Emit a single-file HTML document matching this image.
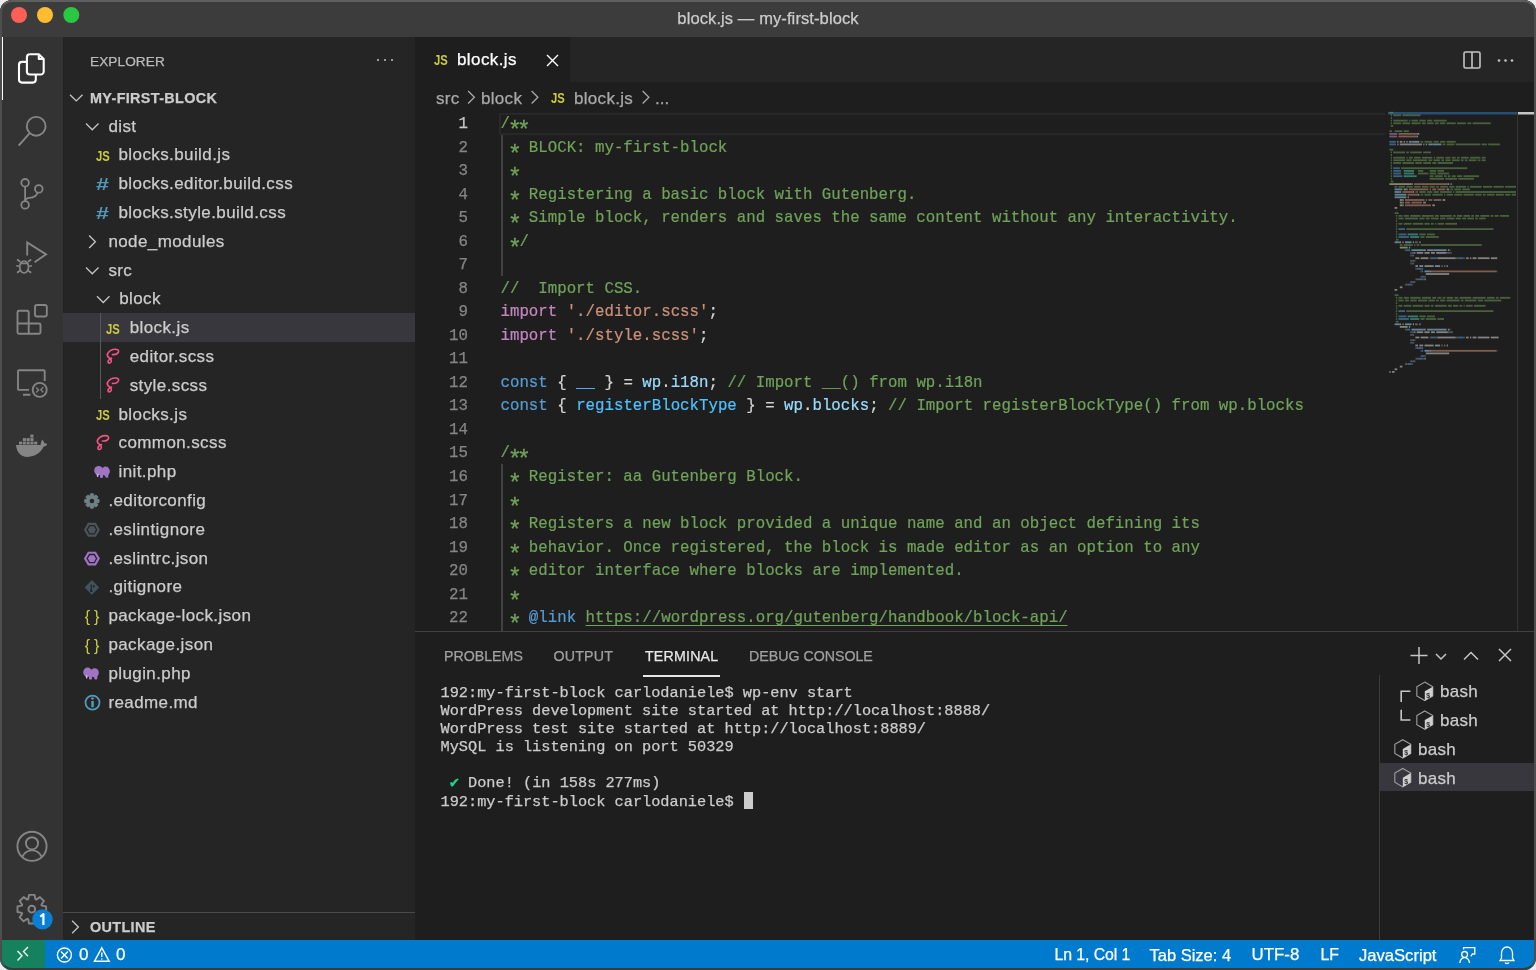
<!DOCTYPE html>
<html><head><meta charset="utf-8"><title>block.js — my-first-block</title>
<style>
*{margin:0;padding:0;box-sizing:border-box}
html,body{width:1536px;height:970px;overflow:hidden;background:#ececec}
body{position:relative;font-family:'Liberation Sans', sans-serif}
#win{position:absolute;left:0;top:0;width:1536px;height:970px;border-radius:12px;overflow:hidden;background:#1e1e1e;filter:blur(0.35px)}
.t{position:absolute;white-space:pre;-webkit-text-stroke:0.25px currentColor}
.r{position:absolute}
svg.ov{position:absolute;left:0;top:0;width:1536px;height:970px}
.ast{display:inline-block;width:9.45px;transform:translateY(8.3px) scale(1.5)}
</style></head>
<body><div id="win"><div class="r" style="left:0px;top:0px;width:1536px;height:37px;background:#3c3c3c;"></div><div class="r" style="left:0px;top:37px;width:63px;height:903px;background:#333333;"></div><div class="r" style="left:63px;top:37px;width:352px;height:903px;background:#252526;"></div><div class="r" style="left:415px;top:37px;width:1121px;height:45px;background:#252526;"></div><div class="r" style="left:415px;top:37px;width:155px;height:45px;background:#1e1e1e;"></div><div class="r" style="left:415px;top:82px;width:1121px;height:549px;background:#1e1e1e;"></div><div class="r" style="left:415px;top:631px;width:1121px;height:309px;background:#1e1e1e;"></div><div class="r" style="left:415px;top:631px;width:1121px;height:1px;background:#414141;"></div><div class="r" style="left:0px;top:940px;width:1536px;height:30px;background:#007acc;"></div><div class="r" style="left:0px;top:940px;width:45px;height:30px;background:#16825d;"></div><div class="t" style="left:0px;top:7.00px;height:23px;line-height:23px;font-size:16.5px;color:#cccccc;letter-spacing:0.1px;width:1536px;text-align:center;">block.js — my-first-block</div><div class="t" style="left:90px;top:51.50px;height:19px;line-height:19px;font-size:13.6px;color:#bbbbbb;letter-spacing:0.1px;">EXPLORER</div><div class="r" style="left:376.8px;top:58.8px;width:2.6px;height:2.6px;border-radius:50%;background:#c5c5c5"></div><div class="r" style="left:383.8px;top:58.8px;width:2.6px;height:2.6px;border-radius:50%;background:#c5c5c5"></div><div class="r" style="left:390.8px;top:58.8px;width:2.6px;height:2.6px;border-radius:50%;background:#c5c5c5"></div><div class="r" style="left:63px;top:313.2px;width:352px;height:28.6px;background:#37373d;"></div><div class="r" style="left:100px;top:312.5px;width:1px;height:86.4px;background:#585858;"></div><div class="t" style="left:90px;top:87.80px;height:20px;line-height:20px;font-size:14.4px;color:#cccccc;font-weight:700;letter-spacing:0.35px;">MY-FIRST-BLOCK</div><div class="t" style="left:108.4px;top:114.60px;height:24px;line-height:24px;font-size:17px;color:#cccccc;letter-spacing:0.4px;">dist</div><div class="t" style="left:118.5px;top:143.40px;height:24px;line-height:24px;font-size:17px;color:#cccccc;letter-spacing:0.4px;">blocks.build.js</div><div class="t" style="left:118.5px;top:172.20px;height:24px;line-height:24px;font-size:17px;color:#cccccc;letter-spacing:0.4px;">blocks.editor.build.css</div><div class="t" style="left:118.5px;top:201.00px;height:24px;line-height:24px;font-size:17px;color:#cccccc;letter-spacing:0.4px;">blocks.style.build.css</div><div class="t" style="left:108.4px;top:229.80px;height:24px;line-height:24px;font-size:17px;color:#cccccc;letter-spacing:0.4px;">node_modules</div><div class="t" style="left:108.4px;top:258.60px;height:24px;line-height:24px;font-size:17px;color:#cccccc;letter-spacing:0.4px;">src</div><div class="t" style="left:119.2px;top:287.40px;height:24px;line-height:24px;font-size:17px;color:#cccccc;letter-spacing:0.4px;">block</div><div class="t" style="left:129.7px;top:316.20px;height:24px;line-height:24px;font-size:17px;color:#cccccc;letter-spacing:0.4px;">block.js</div><div class="t" style="left:129.7px;top:345.00px;height:24px;line-height:24px;font-size:17px;color:#cccccc;letter-spacing:0.4px;">editor.scss</div><div class="t" style="left:129.7px;top:373.80px;height:24px;line-height:24px;font-size:17px;color:#cccccc;letter-spacing:0.4px;">style.scss</div><div class="t" style="left:118.5px;top:402.60px;height:24px;line-height:24px;font-size:17px;color:#cccccc;letter-spacing:0.4px;">blocks.js</div><div class="t" style="left:118.5px;top:431.40px;height:24px;line-height:24px;font-size:17px;color:#cccccc;letter-spacing:0.4px;">common.scss</div><div class="t" style="left:118.5px;top:460.20px;height:24px;line-height:24px;font-size:17px;color:#cccccc;letter-spacing:0.4px;">init.php</div><div class="t" style="left:108.4px;top:489.00px;height:24px;line-height:24px;font-size:17px;color:#cccccc;letter-spacing:0.4px;">.editorconfig</div><div class="t" style="left:108.4px;top:517.80px;height:24px;line-height:24px;font-size:17px;color:#cccccc;letter-spacing:0.4px;">.eslintignore</div><div class="t" style="left:108.4px;top:546.60px;height:24px;line-height:24px;font-size:17px;color:#cccccc;letter-spacing:0.4px;">.eslintrc.json</div><div class="t" style="left:108.4px;top:575.40px;height:24px;line-height:24px;font-size:17px;color:#cccccc;letter-spacing:0.4px;">.gitignore</div><div class="t" style="left:108.4px;top:604.20px;height:24px;line-height:24px;font-size:17px;color:#cccccc;letter-spacing:0.4px;">package-lock.json</div><div class="t" style="left:108.4px;top:633.00px;height:24px;line-height:24px;font-size:17px;color:#cccccc;letter-spacing:0.4px;">package.json</div><div class="t" style="left:108.4px;top:661.80px;height:24px;line-height:24px;font-size:17px;color:#cccccc;letter-spacing:0.4px;">plugin.php</div><div class="t" style="left:108.4px;top:690.60px;height:24px;line-height:24px;font-size:17px;color:#cccccc;letter-spacing:0.4px;">readme.md</div><div class="r" style="left:63px;top:912px;width:352px;height:1px;background:#4a4a4a;"></div><div class="t" style="left:90px;top:917.00px;height:20px;line-height:20px;font-size:14.4px;color:#cccccc;font-weight:700;letter-spacing:0.35px;">OUTLINE</div><div class="t" style="left:457px;top:48.00px;height:24px;line-height:24px;font-size:17px;color:#ffffff;letter-spacing:0.4px;">block.js</div><div class="t" style="left:436px;top:86.60px;height:24px;line-height:24px;font-size:17px;color:#a9a9a9;letter-spacing:0.3px;">src</div><div class="t" style="left:481px;top:86.60px;height:24px;line-height:24px;font-size:17px;color:#a9a9a9;letter-spacing:0.3px;">block</div><div class="t" style="left:574px;top:86.60px;height:24px;line-height:24px;font-size:17px;color:#a9a9a9;letter-spacing:0.3px;">block.js</div><div class="t" style="left:655px;top:86.60px;height:24px;line-height:24px;font-size:17px;color:#a9a9a9;">...</div><div class="r" style="left:499px;top:112.5px;width:886px;height:22px;border:2px solid #282828;border-right:none"></div><div class="r" style="left:501px;top:134.5px;width:1.5px;height:141px;background:#404040;"></div><div class="r" style="left:501px;top:463.5px;width:1.5px;height:167px;background:#404040;"></div><div class="t" style="left:380px;top:113.20px;height:23px;line-height:23px;font-size:15.75px;color:#c6c6c6;font-family:'Liberation Mono', monospace;width:88px;text-align:right;">1</div><div class="t" style="left:500.5px;top:113.20px;height:23px;line-height:23px;font-size:15.75px;color:#d4d4d4;font-family:'Liberation Mono', monospace;-webkit-text-stroke:0.2px currentColor;"><span style="color:#70a35a">/<span class="ast">*</span><span class="ast">*</span></span></div><div class="t" style="left:380px;top:136.72px;height:23px;line-height:23px;font-size:15.75px;color:#858585;font-family:'Liberation Mono', monospace;width:88px;text-align:right;">2</div><div class="t" style="left:500.5px;top:136.72px;height:23px;line-height:23px;font-size:15.75px;color:#d4d4d4;font-family:'Liberation Mono', monospace;-webkit-text-stroke:0.2px currentColor;"><span style="color:#70a35a"> <span class="ast">*</span> BLOCK: my-first-block</span></div><div class="t" style="left:380px;top:160.24px;height:23px;line-height:23px;font-size:15.75px;color:#858585;font-family:'Liberation Mono', monospace;width:88px;text-align:right;">3</div><div class="t" style="left:500.5px;top:160.24px;height:23px;line-height:23px;font-size:15.75px;color:#d4d4d4;font-family:'Liberation Mono', monospace;-webkit-text-stroke:0.2px currentColor;"><span style="color:#70a35a"> <span class="ast">*</span></span></div><div class="t" style="left:380px;top:183.76px;height:23px;line-height:23px;font-size:15.75px;color:#858585;font-family:'Liberation Mono', monospace;width:88px;text-align:right;">4</div><div class="t" style="left:500.5px;top:183.76px;height:23px;line-height:23px;font-size:15.75px;color:#d4d4d4;font-family:'Liberation Mono', monospace;-webkit-text-stroke:0.2px currentColor;"><span style="color:#70a35a"> <span class="ast">*</span> Registering a basic block with Gutenberg.</span></div><div class="t" style="left:380px;top:207.28px;height:23px;line-height:23px;font-size:15.75px;color:#858585;font-family:'Liberation Mono', monospace;width:88px;text-align:right;">5</div><div class="t" style="left:500.5px;top:207.28px;height:23px;line-height:23px;font-size:15.75px;color:#d4d4d4;font-family:'Liberation Mono', monospace;-webkit-text-stroke:0.2px currentColor;"><span style="color:#70a35a"> <span class="ast">*</span> Simple block, renders and saves the same content without any interactivity.</span></div><div class="t" style="left:380px;top:230.80px;height:23px;line-height:23px;font-size:15.75px;color:#858585;font-family:'Liberation Mono', monospace;width:88px;text-align:right;">6</div><div class="t" style="left:500.5px;top:230.80px;height:23px;line-height:23px;font-size:15.75px;color:#d4d4d4;font-family:'Liberation Mono', monospace;-webkit-text-stroke:0.2px currentColor;"><span style="color:#70a35a"> <span class="ast">*</span>/</span></div><div class="t" style="left:380px;top:254.32px;height:23px;line-height:23px;font-size:15.75px;color:#858585;font-family:'Liberation Mono', monospace;width:88px;text-align:right;">7</div><div class="t" style="left:380px;top:277.84px;height:23px;line-height:23px;font-size:15.75px;color:#858585;font-family:'Liberation Mono', monospace;width:88px;text-align:right;">8</div><div class="t" style="left:500.5px;top:277.84px;height:23px;line-height:23px;font-size:15.75px;color:#d4d4d4;font-family:'Liberation Mono', monospace;-webkit-text-stroke:0.2px currentColor;"><span style="color:#70a35a">//  Import CSS.</span></div><div class="t" style="left:380px;top:301.36px;height:23px;line-height:23px;font-size:15.75px;color:#858585;font-family:'Liberation Mono', monospace;width:88px;text-align:right;">9</div><div class="t" style="left:500.5px;top:301.36px;height:23px;line-height:23px;font-size:15.75px;color:#d4d4d4;font-family:'Liberation Mono', monospace;-webkit-text-stroke:0.2px currentColor;"><span style="color:#c586c0">import</span><span style="color:#d4d4d4"> </span><span style="color:#ce9178">&#x27;./editor.scss&#x27;</span><span style="color:#d4d4d4">;</span></div><div class="t" style="left:380px;top:324.88px;height:23px;line-height:23px;font-size:15.75px;color:#858585;font-family:'Liberation Mono', monospace;width:88px;text-align:right;">10</div><div class="t" style="left:500.5px;top:324.88px;height:23px;line-height:23px;font-size:15.75px;color:#d4d4d4;font-family:'Liberation Mono', monospace;-webkit-text-stroke:0.2px currentColor;"><span style="color:#c586c0">import</span><span style="color:#d4d4d4"> </span><span style="color:#ce9178">&#x27;./style.scss&#x27;</span><span style="color:#d4d4d4">;</span></div><div class="t" style="left:380px;top:348.40px;height:23px;line-height:23px;font-size:15.75px;color:#858585;font-family:'Liberation Mono', monospace;width:88px;text-align:right;">11</div><div class="t" style="left:380px;top:371.92px;height:23px;line-height:23px;font-size:15.75px;color:#858585;font-family:'Liberation Mono', monospace;width:88px;text-align:right;">12</div><div class="t" style="left:500.5px;top:371.92px;height:23px;line-height:23px;font-size:15.75px;color:#d4d4d4;font-family:'Liberation Mono', monospace;-webkit-text-stroke:0.2px currentColor;"><span style="color:#569cd6">const</span><span style="color:#d4d4d4"> { </span><span style="color:#4fc1ff">__</span><span style="color:#d4d4d4"> } = </span><span style="color:#9cdcfe">wp</span><span style="color:#d4d4d4">.</span><span style="color:#9cdcfe">i18n</span><span style="color:#d4d4d4">; </span><span style="color:#70a35a">// Import __() from wp.i18n</span></div><div class="t" style="left:380px;top:395.44px;height:23px;line-height:23px;font-size:15.75px;color:#858585;font-family:'Liberation Mono', monospace;width:88px;text-align:right;">13</div><div class="t" style="left:500.5px;top:395.44px;height:23px;line-height:23px;font-size:15.75px;color:#d4d4d4;font-family:'Liberation Mono', monospace;-webkit-text-stroke:0.2px currentColor;"><span style="color:#569cd6">const</span><span style="color:#d4d4d4"> { </span><span style="color:#4fc1ff">registerBlockType</span><span style="color:#d4d4d4"> } = </span><span style="color:#9cdcfe">wp</span><span style="color:#d4d4d4">.</span><span style="color:#9cdcfe">blocks</span><span style="color:#d4d4d4">; </span><span style="color:#70a35a">// Import registerBlockType() from wp.blocks</span></div><div class="t" style="left:380px;top:418.96px;height:23px;line-height:23px;font-size:15.75px;color:#858585;font-family:'Liberation Mono', monospace;width:88px;text-align:right;">14</div><div class="t" style="left:380px;top:442.48px;height:23px;line-height:23px;font-size:15.75px;color:#858585;font-family:'Liberation Mono', monospace;width:88px;text-align:right;">15</div><div class="t" style="left:500.5px;top:442.48px;height:23px;line-height:23px;font-size:15.75px;color:#d4d4d4;font-family:'Liberation Mono', monospace;-webkit-text-stroke:0.2px currentColor;"><span style="color:#70a35a">/<span class="ast">*</span><span class="ast">*</span></span></div><div class="t" style="left:380px;top:466.00px;height:23px;line-height:23px;font-size:15.75px;color:#858585;font-family:'Liberation Mono', monospace;width:88px;text-align:right;">16</div><div class="t" style="left:500.5px;top:466.00px;height:23px;line-height:23px;font-size:15.75px;color:#d4d4d4;font-family:'Liberation Mono', monospace;-webkit-text-stroke:0.2px currentColor;"><span style="color:#70a35a"> <span class="ast">*</span> Register: aa Gutenberg Block.</span></div><div class="t" style="left:380px;top:489.52px;height:23px;line-height:23px;font-size:15.75px;color:#858585;font-family:'Liberation Mono', monospace;width:88px;text-align:right;">17</div><div class="t" style="left:500.5px;top:489.52px;height:23px;line-height:23px;font-size:15.75px;color:#d4d4d4;font-family:'Liberation Mono', monospace;-webkit-text-stroke:0.2px currentColor;"><span style="color:#70a35a"> <span class="ast">*</span></span></div><div class="t" style="left:380px;top:513.04px;height:23px;line-height:23px;font-size:15.75px;color:#858585;font-family:'Liberation Mono', monospace;width:88px;text-align:right;">18</div><div class="t" style="left:500.5px;top:513.04px;height:23px;line-height:23px;font-size:15.75px;color:#d4d4d4;font-family:'Liberation Mono', monospace;-webkit-text-stroke:0.2px currentColor;"><span style="color:#70a35a"> <span class="ast">*</span> Registers a new block provided a unique name and an object defining its</span></div><div class="t" style="left:380px;top:536.56px;height:23px;line-height:23px;font-size:15.75px;color:#858585;font-family:'Liberation Mono', monospace;width:88px;text-align:right;">19</div><div class="t" style="left:500.5px;top:536.56px;height:23px;line-height:23px;font-size:15.75px;color:#d4d4d4;font-family:'Liberation Mono', monospace;-webkit-text-stroke:0.2px currentColor;"><span style="color:#70a35a"> <span class="ast">*</span> behavior. Once registered, the block is made editor as an option to any</span></div><div class="t" style="left:380px;top:560.08px;height:23px;line-height:23px;font-size:15.75px;color:#858585;font-family:'Liberation Mono', monospace;width:88px;text-align:right;">20</div><div class="t" style="left:500.5px;top:560.08px;height:23px;line-height:23px;font-size:15.75px;color:#d4d4d4;font-family:'Liberation Mono', monospace;-webkit-text-stroke:0.2px currentColor;"><span style="color:#70a35a"> <span class="ast">*</span> editor interface where blocks are implemented.</span></div><div class="t" style="left:380px;top:583.60px;height:23px;line-height:23px;font-size:15.75px;color:#858585;font-family:'Liberation Mono', monospace;width:88px;text-align:right;">21</div><div class="t" style="left:500.5px;top:583.60px;height:23px;line-height:23px;font-size:15.75px;color:#d4d4d4;font-family:'Liberation Mono', monospace;-webkit-text-stroke:0.2px currentColor;"><span style="color:#70a35a"> <span class="ast">*</span></span></div><div class="t" style="left:380px;top:607.12px;height:23px;line-height:23px;font-size:15.75px;color:#858585;font-family:'Liberation Mono', monospace;width:88px;text-align:right;">22</div><div class="t" style="left:500.5px;top:607.12px;height:23px;line-height:23px;font-size:15.75px;color:#d4d4d4;font-family:'Liberation Mono', monospace;-webkit-text-stroke:0.2px currentColor;"><span style="color:#70a35a"> <span class="ast">*</span> </span><span style="color:#569cd6">@link</span><span style="color:#70a35a"> </span><span style="color:#70a35a;text-decoration:underline;text-underline-offset:3px">https://wordpress.org/gutenberg/handbook/block-api/</span></div><div class="t" style="left:444px;top:646.00px;height:20px;line-height:20px;font-size:14.2px;color:#a0a0a0;letter-spacing:0px;">PROBLEMS</div><div class="t" style="left:553.5px;top:646.00px;height:20px;line-height:20px;font-size:14.2px;color:#a0a0a0;letter-spacing:0.2px;">OUTPUT</div><div class="t" style="left:645px;top:646.00px;height:20px;line-height:20px;font-size:14.2px;color:#e7e7e7;letter-spacing:0.2px;">TERMINAL</div><div class="t" style="left:749px;top:646.00px;height:20px;line-height:20px;font-size:14.2px;color:#a0a0a0;letter-spacing:0px;">DEBUG CONSOLE</div><div class="r" style="left:642.5px;top:674.5px;width:77px;height:2px;background:#e7e7e7;"></div><div class="t" style="left:440.5px;top:683.50px;height:18px;line-height:18px;font-size:15.28px;color:#cccccc;font-family:'Liberation Mono', monospace;">192:my-first-block carlodaniele$ wp-env start</div><div class="t" style="left:440.5px;top:701.67px;height:18px;line-height:18px;font-size:15.28px;color:#cccccc;font-family:'Liberation Mono', monospace;">WordPress development site started at http://localhost:8888/</div><div class="t" style="left:440.5px;top:719.84px;height:18px;line-height:18px;font-size:15.28px;color:#cccccc;font-family:'Liberation Mono', monospace;">WordPress test site started at http://localhost:8889/</div><div class="t" style="left:440.5px;top:738.01px;height:18px;line-height:18px;font-size:15.28px;color:#cccccc;font-family:'Liberation Mono', monospace;">MySQL is listening on port 50329</div><div class="t" style="left:440.5px;top:774.35px;height:18px;line-height:18px;font-size:15.28px;color:#cccccc;font-family:'Liberation Mono', monospace;"> <span style="color:#23d18b">✔</span> Done! (in 158s 277ms)</div><div class="t" style="left:440.5px;top:792.52px;height:18px;line-height:18px;font-size:15.28px;color:#cccccc;font-family:'Liberation Mono', monospace;">192:my-first-block carlodaniele$ </div><div class="r" style="left:744px;top:792px;width:8.5px;height:17px;background:#cccccc;"></div><div class="r" style="left:1379px;top:675px;width:1px;height:265px;background:#3c3c3c;"></div><div class="r" style="left:1380px;top:762.5px;width:156px;height:28.8px;background:#37373d;"></div><div class="t" style="left:1440px;top:680.30px;height:24px;line-height:24px;font-size:17px;color:#cccccc;letter-spacing:0.3px;">bash</div><div class="t" style="left:1440px;top:709.10px;height:24px;line-height:24px;font-size:17px;color:#cccccc;letter-spacing:0.3px;">bash</div><div class="t" style="left:1418px;top:737.90px;height:24px;line-height:24px;font-size:17px;color:#cccccc;letter-spacing:0.3px;">bash</div><div class="t" style="left:1418px;top:766.70px;height:24px;line-height:24px;font-size:17px;color:#cccccc;letter-spacing:0.3px;">bash</div><div class="t" style="left:79px;top:943.00px;height:24px;line-height:24px;font-size:17px;color:#ffffff;">0</div><div class="t" style="left:116px;top:943.00px;height:24px;line-height:24px;font-size:17px;color:#ffffff;">0</div><div class="t" style="left:1054.5px;top:944.00px;height:22px;line-height:22px;font-size:15.9px;color:#ffffff;letter-spacing:-0.1px;">Ln 1, Col 1</div><div class="t" style="left:1149.5px;top:943.50px;height:23px;line-height:23px;font-size:16.5px;color:#ffffff;">Tab Size: 4</div><div class="t" style="left:1251.5px;top:943.00px;height:24px;line-height:24px;font-size:16.9px;color:#ffffff;">UTF-8</div><div class="t" style="left:1320.5px;top:944.00px;height:22px;line-height:22px;font-size:15.8px;color:#ffffff;">LF</div><div class="t" style="left:1359px;top:943.50px;height:23px;line-height:23px;font-size:16.6px;color:#ffffff;">JavaScript</div><svg class="ov" viewBox="0 0 1536 970"><rect x="1388" y="112" width="129" height="2.5" fill="#264f78"/><g opacity="0.55"><rect x="1389.4" y="111.8" width="3.9" height="1.8" fill="#6a9955"/><rect x="1390.7" y="114.4" width="1.3" height="1.8" fill="#6a9955"/><rect x="1393.3" y="114.4" width="7.8" height="1.8" fill="#6a9955"/><rect x="1402.4" y="114.4" width="18.2" height="1.8" fill="#6a9955"/><rect x="1390.7" y="117.1" width="1.3" height="1.8" fill="#6a9955"/><rect x="1390.7" y="119.7" width="1.3" height="1.8" fill="#6a9955"/><rect x="1393.3" y="119.7" width="14.3" height="1.8" fill="#6a9955"/><rect x="1408.9" y="119.7" width="1.3" height="1.8" fill="#6a9955"/><rect x="1411.5" y="119.7" width="6.5" height="1.8" fill="#6a9955"/><rect x="1419.3" y="119.7" width="6.5" height="1.8" fill="#6a9955"/><rect x="1427.1" y="119.7" width="5.2" height="1.8" fill="#6a9955"/><rect x="1433.6" y="119.7" width="13.0" height="1.8" fill="#6a9955"/><rect x="1390.7" y="122.4" width="1.3" height="1.8" fill="#6a9955"/><rect x="1393.3" y="122.4" width="7.8" height="1.8" fill="#6a9955"/><rect x="1402.4" y="122.4" width="7.8" height="1.8" fill="#6a9955"/><rect x="1411.5" y="122.4" width="9.1" height="1.8" fill="#6a9955"/><rect x="1421.9" y="122.4" width="3.9" height="1.8" fill="#6a9955"/><rect x="1427.1" y="122.4" width="6.5" height="1.8" fill="#6a9955"/><rect x="1434.9" y="122.4" width="3.9" height="1.8" fill="#6a9955"/><rect x="1440.1" y="122.4" width="5.2" height="1.8" fill="#6a9955"/><rect x="1446.6" y="122.4" width="9.1" height="1.8" fill="#6a9955"/><rect x="1457.0" y="122.4" width="9.1" height="1.8" fill="#6a9955"/><rect x="1467.4" y="122.4" width="3.9" height="1.8" fill="#6a9955"/><rect x="1472.6" y="122.4" width="18.2" height="1.8" fill="#6a9955"/><rect x="1390.7" y="125.0" width="2.6" height="1.8" fill="#6a9955"/><rect x="1389.4" y="130.3" width="2.6" height="1.8" fill="#6a9955"/><rect x="1394.6" y="130.3" width="7.8" height="1.8" fill="#6a9955"/><rect x="1403.7" y="130.3" width="5.2" height="1.8" fill="#6a9955"/><rect x="1389.4" y="133.0" width="7.8" height="1.8" fill="#c586c0"/><rect x="1398.5" y="133.0" width="19.5" height="1.8" fill="#ce9178"/><rect x="1418.0" y="133.0" width="1.3" height="1.8" fill="#d4d4d4"/><rect x="1389.4" y="135.6" width="7.8" height="1.8" fill="#c586c0"/><rect x="1398.5" y="135.6" width="18.2" height="1.8" fill="#ce9178"/><rect x="1416.7" y="135.6" width="1.3" height="1.8" fill="#d4d4d4"/><rect x="1389.4" y="140.9" width="6.5" height="1.8" fill="#569cd6"/><rect x="1397.2" y="140.9" width="1.3" height="1.8" fill="#d4d4d4"/><rect x="1399.8" y="140.9" width="2.6" height="1.8" fill="#d4d4d4"/><rect x="1403.7" y="140.9" width="1.3" height="1.8" fill="#d4d4d4"/><rect x="1406.3" y="140.9" width="1.3" height="1.8" fill="#d4d4d4"/><rect x="1408.9" y="140.9" width="2.6" height="1.8" fill="#9cdcfe"/><rect x="1411.5" y="140.9" width="1.3" height="1.8" fill="#d4d4d4"/><rect x="1412.8" y="140.9" width="5.2" height="1.8" fill="#9cdcfe"/><rect x="1418.0" y="140.9" width="1.3" height="1.8" fill="#d4d4d4"/><rect x="1420.6" y="140.9" width="2.6" height="1.8" fill="#6a9955"/><rect x="1424.5" y="140.9" width="7.8" height="1.8" fill="#6a9955"/><rect x="1433.6" y="140.9" width="5.2" height="1.8" fill="#6a9955"/><rect x="1440.1" y="140.9" width="5.2" height="1.8" fill="#6a9955"/><rect x="1446.6" y="140.9" width="9.1" height="1.8" fill="#6a9955"/><rect x="1389.4" y="143.5" width="6.5" height="1.8" fill="#569cd6"/><rect x="1397.2" y="143.5" width="1.3" height="1.8" fill="#d4d4d4"/><rect x="1399.8" y="143.5" width="22.1" height="1.8" fill="#d4d4d4"/><rect x="1423.2" y="143.5" width="1.3" height="1.8" fill="#d4d4d4"/><rect x="1425.8" y="143.5" width="1.3" height="1.8" fill="#d4d4d4"/><rect x="1428.4" y="143.5" width="2.6" height="1.8" fill="#9cdcfe"/><rect x="1431.0" y="143.5" width="1.3" height="1.8" fill="#d4d4d4"/><rect x="1432.3" y="143.5" width="7.8" height="1.8" fill="#9cdcfe"/><rect x="1440.1" y="143.5" width="1.3" height="1.8" fill="#d4d4d4"/><rect x="1442.7" y="143.5" width="2.6" height="1.8" fill="#6a9955"/><rect x="1446.6" y="143.5" width="7.8" height="1.8" fill="#6a9955"/><rect x="1455.7" y="143.5" width="24.7" height="1.8" fill="#6a9955"/><rect x="1481.7" y="143.5" width="5.2" height="1.8" fill="#6a9955"/><rect x="1488.2" y="143.5" width="11.7" height="1.8" fill="#6a9955"/><rect x="1389.4" y="148.8" width="3.9" height="1.8" fill="#6a9955"/><rect x="1390.7" y="151.5" width="1.3" height="1.8" fill="#6a9955"/><rect x="1393.3" y="151.5" width="11.7" height="1.8" fill="#6a9955"/><rect x="1406.3" y="151.5" width="2.6" height="1.8" fill="#6a9955"/><rect x="1410.2" y="151.5" width="11.7" height="1.8" fill="#6a9955"/><rect x="1423.2" y="151.5" width="7.8" height="1.8" fill="#6a9955"/><rect x="1390.7" y="154.1" width="1.3" height="1.8" fill="#6a9955"/><rect x="1390.7" y="156.8" width="1.3" height="1.8" fill="#6a9955"/><rect x="1393.3" y="156.8" width="11.7" height="1.8" fill="#6a9955"/><rect x="1406.3" y="156.8" width="1.3" height="1.8" fill="#6a9955"/><rect x="1408.9" y="156.8" width="3.9" height="1.8" fill="#6a9955"/><rect x="1414.1" y="156.8" width="6.5" height="1.8" fill="#6a9955"/><rect x="1421.9" y="156.8" width="10.4" height="1.8" fill="#6a9955"/><rect x="1433.6" y="156.8" width="1.3" height="1.8" fill="#6a9955"/><rect x="1436.2" y="156.8" width="7.8" height="1.8" fill="#6a9955"/><rect x="1445.3" y="156.8" width="5.2" height="1.8" fill="#6a9955"/><rect x="1451.8" y="156.8" width="3.9" height="1.8" fill="#6a9955"/><rect x="1457.0" y="156.8" width="2.6" height="1.8" fill="#6a9955"/><rect x="1460.9" y="156.8" width="7.8" height="1.8" fill="#6a9955"/><rect x="1470.0" y="156.8" width="10.4" height="1.8" fill="#6a9955"/><rect x="1481.7" y="156.8" width="3.9" height="1.8" fill="#6a9955"/><rect x="1390.7" y="159.4" width="1.3" height="1.8" fill="#6a9955"/><rect x="1393.3" y="159.4" width="11.7" height="1.8" fill="#6a9955"/><rect x="1406.3" y="159.4" width="5.2" height="1.8" fill="#6a9955"/><rect x="1412.8" y="159.4" width="14.3" height="1.8" fill="#6a9955"/><rect x="1428.4" y="159.4" width="3.9" height="1.8" fill="#6a9955"/><rect x="1433.6" y="159.4" width="6.5" height="1.8" fill="#6a9955"/><rect x="1441.4" y="159.4" width="2.6" height="1.8" fill="#6a9955"/><rect x="1445.3" y="159.4" width="5.2" height="1.8" fill="#6a9955"/><rect x="1451.8" y="159.4" width="7.8" height="1.8" fill="#6a9955"/><rect x="1460.9" y="159.4" width="2.6" height="1.8" fill="#6a9955"/><rect x="1464.8" y="159.4" width="2.6" height="1.8" fill="#6a9955"/><rect x="1468.7" y="159.4" width="7.8" height="1.8" fill="#6a9955"/><rect x="1477.8" y="159.4" width="2.6" height="1.8" fill="#6a9955"/><rect x="1481.7" y="159.4" width="3.9" height="1.8" fill="#6a9955"/><rect x="1390.7" y="162.1" width="1.3" height="1.8" fill="#6a9955"/><rect x="1393.3" y="162.1" width="7.8" height="1.8" fill="#6a9955"/><rect x="1402.4" y="162.1" width="11.7" height="1.8" fill="#6a9955"/><rect x="1415.4" y="162.1" width="6.5" height="1.8" fill="#6a9955"/><rect x="1423.2" y="162.1" width="7.8" height="1.8" fill="#6a9955"/><rect x="1432.3" y="162.1" width="3.9" height="1.8" fill="#6a9955"/><rect x="1437.5" y="162.1" width="15.6" height="1.8" fill="#6a9955"/><rect x="1390.7" y="164.7" width="1.3" height="1.8" fill="#6a9955"/><rect x="1390.7" y="167.3" width="1.3" height="1.8" fill="#6a9955"/><rect x="1393.3" y="167.3" width="6.5" height="1.8" fill="#569cd6"/><rect x="1401.1" y="167.3" width="66.3" height="1.8" fill="#6a9955"/><rect x="1390.7" y="170.0" width="1.3" height="1.8" fill="#6a9955"/><rect x="1393.3" y="170.0" width="7.8" height="1.8" fill="#569cd6"/><rect x="1403.7" y="170.0" width="10.4" height="1.8" fill="#4ec9b0"/><rect x="1418.0" y="170.0" width="5.2" height="1.8" fill="#6a9955"/><rect x="1429.7" y="170.0" width="6.5" height="1.8" fill="#6a9955"/><rect x="1437.5" y="170.0" width="6.5" height="1.8" fill="#6a9955"/><rect x="1390.7" y="172.6" width="1.3" height="1.8" fill="#6a9955"/><rect x="1393.3" y="172.6" width="7.8" height="1.8" fill="#569cd6"/><rect x="1403.7" y="172.6" width="10.4" height="1.8" fill="#4ec9b0"/><rect x="1418.0" y="172.6" width="10.4" height="1.8" fill="#6a9955"/><rect x="1429.7" y="172.6" width="6.5" height="1.8" fill="#6a9955"/><rect x="1437.5" y="172.6" width="11.7" height="1.8" fill="#6a9955"/><rect x="1390.7" y="175.3" width="1.3" height="1.8" fill="#6a9955"/><rect x="1393.3" y="175.3" width="9.1" height="1.8" fill="#569cd6"/><rect x="1403.7" y="175.3" width="13.0" height="1.8" fill="#4ec9b0"/><rect x="1429.7" y="175.3" width="3.9" height="1.8" fill="#6a9955"/><rect x="1434.9" y="175.3" width="7.8" height="1.8" fill="#6a9955"/><rect x="1444.0" y="175.3" width="2.6" height="1.8" fill="#6a9955"/><rect x="1447.9" y="175.3" width="2.6" height="1.8" fill="#6a9955"/><rect x="1451.8" y="175.3" width="3.9" height="1.8" fill="#6a9955"/><rect x="1457.0" y="175.3" width="5.2" height="1.8" fill="#6a9955"/><rect x="1463.5" y="175.3" width="15.6" height="1.8" fill="#6a9955"/><rect x="1390.7" y="177.9" width="1.3" height="1.8" fill="#6a9955"/><rect x="1429.7" y="177.9" width="14.3" height="1.8" fill="#6a9955"/><rect x="1445.3" y="177.9" width="11.7" height="1.8" fill="#6a9955"/><rect x="1458.3" y="177.9" width="15.6" height="1.8" fill="#6a9955"/><rect x="1390.7" y="180.6" width="2.6" height="1.8" fill="#6a9955"/><rect x="1389.4" y="183.2" width="22.1" height="1.8" fill="#dcdcaa"/><rect x="1411.5" y="183.2" width="1.3" height="1.8" fill="#d4d4d4"/><rect x="1414.1" y="183.2" width="33.8" height="1.8" fill="#ce9178"/><rect x="1447.9" y="183.2" width="1.3" height="1.8" fill="#d4d4d4"/><rect x="1450.5" y="183.2" width="1.3" height="1.8" fill="#d4d4d4"/><rect x="1394.6" y="185.9" width="2.6" height="1.8" fill="#6a9955"/><rect x="1398.5" y="185.9" width="6.5" height="1.8" fill="#6a9955"/><rect x="1406.3" y="185.9" width="6.5" height="1.8" fill="#6a9955"/><rect x="1414.1" y="185.9" width="6.5" height="1.8" fill="#6a9955"/><rect x="1421.9" y="185.9" width="6.5" height="1.8" fill="#6a9955"/><rect x="1429.7" y="185.9" width="5.2" height="1.8" fill="#6a9955"/><rect x="1436.2" y="185.9" width="2.6" height="1.8" fill="#6a9955"/><rect x="1440.1" y="185.9" width="7.8" height="1.8" fill="#6a9955"/><rect x="1449.2" y="185.9" width="5.2" height="1.8" fill="#6a9955"/><rect x="1455.7" y="185.9" width="10.4" height="1.8" fill="#6a9955"/><rect x="1467.4" y="185.9" width="1.3" height="1.8" fill="#6a9955"/><rect x="1470.0" y="185.9" width="11.7" height="1.8" fill="#6a9955"/><rect x="1483.0" y="185.9" width="9.1" height="1.8" fill="#6a9955"/><rect x="1493.4" y="185.9" width="10.4" height="1.8" fill="#6a9955"/><rect x="1505.1" y="185.9" width="10.9" height="1.8" fill="#6a9955"/><rect x="1394.6" y="188.5" width="6.5" height="1.8" fill="#9cdcfe"/><rect x="1401.1" y="188.5" width="1.3" height="1.8" fill="#d4d4d4"/><rect x="1403.7" y="188.5" width="2.6" height="1.8" fill="#dcdcaa"/><rect x="1406.3" y="188.5" width="1.3" height="1.8" fill="#d4d4d4"/><rect x="1408.9" y="188.5" width="19.5" height="1.8" fill="#ce9178"/><rect x="1429.7" y="188.5" width="1.3" height="1.8" fill="#ce9178"/><rect x="1432.3" y="188.5" width="3.9" height="1.8" fill="#ce9178"/><rect x="1437.5" y="188.5" width="7.8" height="1.8" fill="#ce9178"/><rect x="1446.6" y="188.5" width="2.6" height="1.8" fill="#d4d4d4"/><rect x="1450.5" y="188.5" width="2.6" height="1.8" fill="#6a9955"/><rect x="1454.4" y="188.5" width="6.5" height="1.8" fill="#6a9955"/><rect x="1462.2" y="188.5" width="7.8" height="1.8" fill="#6a9955"/><rect x="1394.6" y="191.1" width="5.2" height="1.8" fill="#9cdcfe"/><rect x="1399.8" y="191.1" width="1.3" height="1.8" fill="#d4d4d4"/><rect x="1402.4" y="191.1" width="10.4" height="1.8" fill="#ce9178"/><rect x="1412.8" y="191.1" width="1.3" height="1.8" fill="#d4d4d4"/><rect x="1415.4" y="191.1" width="2.6" height="1.8" fill="#6a9955"/><rect x="1419.3" y="191.1" width="6.5" height="1.8" fill="#6a9955"/><rect x="1427.1" y="191.1" width="5.2" height="1.8" fill="#6a9955"/><rect x="1433.6" y="191.1" width="5.2" height="1.8" fill="#6a9955"/><rect x="1440.1" y="191.1" width="11.7" height="1.8" fill="#6a9955"/><rect x="1453.1" y="191.1" width="1.3" height="1.8" fill="#6a9955"/><rect x="1455.7" y="191.1" width="60.3" height="1.8" fill="#6a9955"/><rect x="1394.6" y="193.8" width="10.4" height="1.8" fill="#9cdcfe"/><rect x="1405.0" y="193.8" width="1.3" height="1.8" fill="#d4d4d4"/><rect x="1407.6" y="193.8" width="10.4" height="1.8" fill="#ce9178"/><rect x="1418.0" y="193.8" width="1.3" height="1.8" fill="#d4d4d4"/><rect x="1420.6" y="193.8" width="2.6" height="1.8" fill="#6a9955"/><rect x="1424.5" y="193.8" width="6.5" height="1.8" fill="#6a9955"/><rect x="1432.3" y="193.8" width="10.4" height="1.8" fill="#6a9955"/><rect x="1444.0" y="193.8" width="1.3" height="1.8" fill="#6a9955"/><rect x="1446.6" y="193.8" width="6.5" height="1.8" fill="#6a9955"/><rect x="1454.4" y="193.8" width="7.8" height="1.8" fill="#6a9955"/><rect x="1463.5" y="193.8" width="10.4" height="1.8" fill="#6a9955"/><rect x="1475.2" y="193.8" width="6.5" height="1.8" fill="#6a9955"/><rect x="1483.0" y="193.8" width="2.6" height="1.8" fill="#6a9955"/><rect x="1486.9" y="193.8" width="7.8" height="1.8" fill="#6a9955"/><rect x="1496.0" y="193.8" width="7.8" height="1.8" fill="#6a9955"/><rect x="1505.1" y="193.8" width="5.2" height="1.8" fill="#6a9955"/><rect x="1511.6" y="193.8" width="4.4" height="1.8" fill="#6a9955"/><rect x="1394.6" y="196.4" width="10.4" height="1.8" fill="#9cdcfe"/><rect x="1405.0" y="196.4" width="1.3" height="1.8" fill="#d4d4d4"/><rect x="1407.6" y="196.4" width="1.3" height="1.8" fill="#d4d4d4"/><rect x="1399.8" y="199.1" width="2.6" height="1.8" fill="#dcdcaa"/><rect x="1402.4" y="199.1" width="1.3" height="1.8" fill="#d4d4d4"/><rect x="1405.0" y="199.1" width="19.5" height="1.8" fill="#ce9178"/><rect x="1425.8" y="199.1" width="1.3" height="1.8" fill="#ce9178"/><rect x="1428.4" y="199.1" width="3.9" height="1.8" fill="#ce9178"/><rect x="1433.6" y="199.1" width="7.8" height="1.8" fill="#ce9178"/><rect x="1442.7" y="199.1" width="2.6" height="1.8" fill="#d4d4d4"/><rect x="1399.8" y="201.7" width="2.6" height="1.8" fill="#dcdcaa"/><rect x="1402.4" y="201.7" width="1.3" height="1.8" fill="#d4d4d4"/><rect x="1405.0" y="201.7" width="5.2" height="1.8" fill="#ce9178"/><rect x="1411.5" y="201.7" width="10.4" height="1.8" fill="#ce9178"/><rect x="1423.2" y="201.7" width="2.6" height="1.8" fill="#d4d4d4"/><rect x="1399.8" y="204.4" width="2.6" height="1.8" fill="#dcdcaa"/><rect x="1402.4" y="204.4" width="1.3" height="1.8" fill="#d4d4d4"/><rect x="1405.0" y="204.4" width="26.0" height="1.8" fill="#ce9178"/><rect x="1432.3" y="204.4" width="2.6" height="1.8" fill="#d4d4d4"/><rect x="1394.6" y="207.0" width="2.6" height="1.8" fill="#d4d4d4"/><rect x="1394.6" y="212.3" width="3.9" height="1.8" fill="#6a9955"/><rect x="1395.9" y="215.0" width="1.3" height="1.8" fill="#6a9955"/><rect x="1398.5" y="215.0" width="3.9" height="1.8" fill="#6a9955"/><rect x="1403.7" y="215.0" width="5.2" height="1.8" fill="#6a9955"/><rect x="1410.2" y="215.0" width="10.4" height="1.8" fill="#6a9955"/><rect x="1421.9" y="215.0" width="11.7" height="1.8" fill="#6a9955"/><rect x="1434.9" y="215.0" width="3.9" height="1.8" fill="#6a9955"/><rect x="1440.1" y="215.0" width="11.7" height="1.8" fill="#6a9955"/><rect x="1453.1" y="215.0" width="2.6" height="1.8" fill="#6a9955"/><rect x="1457.0" y="215.0" width="5.2" height="1.8" fill="#6a9955"/><rect x="1463.5" y="215.0" width="6.5" height="1.8" fill="#6a9955"/><rect x="1471.3" y="215.0" width="2.6" height="1.8" fill="#6a9955"/><rect x="1475.2" y="215.0" width="3.9" height="1.8" fill="#6a9955"/><rect x="1480.4" y="215.0" width="9.1" height="1.8" fill="#6a9955"/><rect x="1490.8" y="215.0" width="2.6" height="1.8" fill="#6a9955"/><rect x="1494.7" y="215.0" width="3.9" height="1.8" fill="#6a9955"/><rect x="1499.9" y="215.0" width="9.1" height="1.8" fill="#6a9955"/><rect x="1395.9" y="217.6" width="1.3" height="1.8" fill="#6a9955"/><rect x="1398.5" y="217.6" width="5.2" height="1.8" fill="#6a9955"/><rect x="1405.0" y="217.6" width="13.0" height="1.8" fill="#6a9955"/><rect x="1419.3" y="217.6" width="5.2" height="1.8" fill="#6a9955"/><rect x="1425.8" y="217.6" width="3.9" height="1.8" fill="#6a9955"/><rect x="1431.0" y="217.6" width="7.8" height="1.8" fill="#6a9955"/><rect x="1440.1" y="217.6" width="5.2" height="1.8" fill="#6a9955"/><rect x="1446.6" y="217.6" width="7.8" height="1.8" fill="#6a9955"/><rect x="1455.7" y="217.6" width="5.2" height="1.8" fill="#6a9955"/><rect x="1462.2" y="217.6" width="3.9" height="1.8" fill="#6a9955"/><rect x="1467.4" y="217.6" width="6.5" height="1.8" fill="#6a9955"/><rect x="1475.2" y="217.6" width="2.6" height="1.8" fill="#6a9955"/><rect x="1479.1" y="217.6" width="6.5" height="1.8" fill="#6a9955"/><rect x="1395.9" y="220.2" width="1.3" height="1.8" fill="#6a9955"/><rect x="1395.9" y="222.9" width="1.3" height="1.8" fill="#6a9955"/><rect x="1398.5" y="222.9" width="3.9" height="1.8" fill="#6a9955"/><rect x="1403.7" y="222.9" width="7.8" height="1.8" fill="#6a9955"/><rect x="1412.8" y="222.9" width="10.4" height="1.8" fill="#6a9955"/><rect x="1424.5" y="222.9" width="5.2" height="1.8" fill="#6a9955"/><rect x="1431.0" y="222.9" width="2.6" height="1.8" fill="#6a9955"/><rect x="1434.9" y="222.9" width="1.3" height="1.8" fill="#6a9955"/><rect x="1437.5" y="222.9" width="6.5" height="1.8" fill="#6a9955"/><rect x="1445.3" y="222.9" width="11.7" height="1.8" fill="#6a9955"/><rect x="1395.9" y="225.5" width="1.3" height="1.8" fill="#6a9955"/><rect x="1395.9" y="228.2" width="1.3" height="1.8" fill="#6a9955"/><rect x="1398.5" y="228.2" width="6.5" height="1.8" fill="#569cd6"/><rect x="1406.3" y="228.2" width="87.1" height="1.8" fill="#6a9955"/><rect x="1395.9" y="230.8" width="1.3" height="1.8" fill="#6a9955"/><rect x="1395.9" y="233.5" width="1.3" height="1.8" fill="#6a9955"/><rect x="1398.5" y="233.5" width="7.8" height="1.8" fill="#569cd6"/><rect x="1407.6" y="233.5" width="10.4" height="1.8" fill="#4ec9b0"/><rect x="1419.3" y="233.5" width="6.5" height="1.8" fill="#6a9955"/><rect x="1427.1" y="233.5" width="7.8" height="1.8" fill="#6a9955"/><rect x="1395.9" y="236.1" width="1.3" height="1.8" fill="#6a9955"/><rect x="1398.5" y="236.1" width="10.4" height="1.8" fill="#569cd6"/><rect x="1410.2" y="236.1" width="9.1" height="1.8" fill="#4ec9b0"/><rect x="1420.6" y="236.1" width="3.9" height="1.8" fill="#6a9955"/><rect x="1425.8" y="236.1" width="13.0" height="1.8" fill="#6a9955"/><rect x="1395.9" y="238.8" width="2.6" height="1.8" fill="#6a9955"/><rect x="1394.6" y="241.4" width="5.2" height="1.8" fill="#9cdcfe"/><rect x="1399.8" y="241.4" width="1.3" height="1.8" fill="#d4d4d4"/><rect x="1402.4" y="241.4" width="1.3" height="1.8" fill="#d4d4d4"/><rect x="1405.0" y="241.4" width="6.5" height="1.8" fill="#9cdcfe"/><rect x="1412.8" y="241.4" width="1.3" height="1.8" fill="#d4d4d4"/><rect x="1415.4" y="241.4" width="1.3" height="1.8" fill="#d4d4d4"/><rect x="1416.7" y="241.4" width="1.3" height="1.8" fill="#808080"/><rect x="1419.3" y="241.4" width="1.3" height="1.8" fill="#d4d4d4"/><rect x="1399.8" y="244.1" width="2.6" height="1.8" fill="#6a9955"/><rect x="1403.7" y="244.1" width="9.1" height="1.8" fill="#6a9955"/><rect x="1414.1" y="244.1" width="1.3" height="1.8" fill="#6a9955"/><rect x="1416.7" y="244.1" width="2.6" height="1.8" fill="#6a9955"/><rect x="1420.6" y="244.1" width="61.1" height="1.8" fill="#6a9955"/><rect x="1399.8" y="246.7" width="7.8" height="1.8" fill="#dcdcaa"/><rect x="1408.9" y="246.7" width="1.3" height="1.8" fill="#d4d4d4"/><rect x="1405.0" y="249.3" width="1.3" height="1.8" fill="#808080"/><rect x="1406.3" y="249.3" width="3.9" height="1.8" fill="#569cd6"/><rect x="1411.5" y="249.3" width="11.7" height="1.8" fill="#9cdcfe"/><rect x="1423.2" y="249.3" width="2.6" height="1.8" fill="#d4d4d4"/><rect x="1427.1" y="249.3" width="6.5" height="1.8" fill="#9cdcfe"/><rect x="1433.6" y="249.3" width="1.3" height="1.8" fill="#d4d4d4"/><rect x="1434.9" y="249.3" width="11.7" height="1.8" fill="#9cdcfe"/><rect x="1447.9" y="249.3" width="1.3" height="1.8" fill="#d4d4d4"/><rect x="1449.2" y="249.3" width="1.3" height="1.8" fill="#808080"/><rect x="1410.2" y="252.0" width="1.3" height="1.8" fill="#808080"/><rect x="1411.5" y="252.0" width="1.3" height="1.8" fill="#569cd6"/><rect x="1412.8" y="252.0" width="1.3" height="1.8" fill="#808080"/><rect x="1414.1" y="252.0" width="1.3" height="1.8" fill="#d4d4d4"/><rect x="1416.7" y="252.0" width="6.5" height="1.8" fill="#d4d4d4"/><rect x="1424.5" y="252.0" width="5.2" height="1.8" fill="#d4d4d4"/><rect x="1431.0" y="252.0" width="3.9" height="1.8" fill="#d4d4d4"/><rect x="1436.2" y="252.0" width="10.4" height="1.8" fill="#d4d4d4"/><rect x="1446.6" y="252.0" width="2.6" height="1.8" fill="#808080"/><rect x="1449.2" y="252.0" width="1.3" height="1.8" fill="#569cd6"/><rect x="1450.5" y="252.0" width="1.3" height="1.8" fill="#808080"/><rect x="1410.2" y="254.6" width="1.3" height="1.8" fill="#808080"/><rect x="1411.5" y="254.6" width="1.3" height="1.8" fill="#569cd6"/><rect x="1412.8" y="254.6" width="1.3" height="1.8" fill="#808080"/><rect x="1415.4" y="257.3" width="3.9" height="1.8" fill="#d4d4d4"/><rect x="1420.6" y="257.3" width="7.8" height="1.8" fill="#d4d4d4"/><rect x="1429.7" y="257.3" width="1.3" height="1.8" fill="#808080"/><rect x="1431.0" y="257.3" width="5.2" height="1.8" fill="#569cd6"/><rect x="1436.2" y="257.3" width="1.3" height="1.8" fill="#808080"/><rect x="1437.5" y="257.3" width="18.2" height="1.8" fill="#d4d4d4"/><rect x="1455.7" y="257.3" width="2.6" height="1.8" fill="#808080"/><rect x="1458.3" y="257.3" width="5.2" height="1.8" fill="#569cd6"/><rect x="1463.5" y="257.3" width="1.3" height="1.8" fill="#808080"/><rect x="1466.1" y="257.3" width="2.6" height="1.8" fill="#d4d4d4"/><rect x="1470.0" y="257.3" width="1.3" height="1.8" fill="#d4d4d4"/><rect x="1472.6" y="257.3" width="3.9" height="1.8" fill="#d4d4d4"/><rect x="1477.8" y="257.3" width="11.7" height="1.8" fill="#d4d4d4"/><rect x="1490.8" y="257.3" width="6.5" height="1.8" fill="#d4d4d4"/><rect x="1410.2" y="259.9" width="2.6" height="1.8" fill="#808080"/><rect x="1412.8" y="259.9" width="1.3" height="1.8" fill="#569cd6"/><rect x="1414.1" y="259.9" width="1.3" height="1.8" fill="#808080"/><rect x="1410.2" y="262.6" width="1.3" height="1.8" fill="#808080"/><rect x="1411.5" y="262.6" width="1.3" height="1.8" fill="#569cd6"/><rect x="1412.8" y="262.6" width="1.3" height="1.8" fill="#808080"/><rect x="1415.4" y="265.2" width="2.6" height="1.8" fill="#d4d4d4"/><rect x="1419.3" y="265.2" width="3.9" height="1.8" fill="#d4d4d4"/><rect x="1424.5" y="265.2" width="9.1" height="1.8" fill="#d4d4d4"/><rect x="1434.9" y="265.2" width="5.2" height="1.8" fill="#d4d4d4"/><rect x="1441.4" y="265.2" width="1.3" height="1.8" fill="#ce9178"/><rect x="1444.0" y="265.2" width="1.3" height="1.8" fill="#ce9178"/><rect x="1446.6" y="265.2" width="1.3" height="1.8" fill="#d4d4d4"/><rect x="1415.4" y="267.9" width="1.3" height="1.8" fill="#808080"/><rect x="1416.7" y="267.9" width="5.2" height="1.8" fill="#569cd6"/><rect x="1421.9" y="267.9" width="1.3" height="1.8" fill="#808080"/><rect x="1420.6" y="270.5" width="1.3" height="1.8" fill="#808080"/><rect x="1421.9" y="270.5" width="1.3" height="1.8" fill="#569cd6"/><rect x="1424.5" y="270.5" width="5.2" height="1.8" fill="#9cdcfe"/><rect x="1429.7" y="270.5" width="1.3" height="1.8" fill="#d4d4d4"/><rect x="1431.0" y="270.5" width="65.0" height="1.8" fill="#ce9178"/><rect x="1496.0" y="270.5" width="1.3" height="1.8" fill="#808080"/><rect x="1425.8" y="273.1" width="23.4" height="1.8" fill="#d4d4d4"/><rect x="1420.6" y="275.8" width="2.6" height="1.8" fill="#808080"/><rect x="1423.2" y="275.8" width="1.3" height="1.8" fill="#569cd6"/><rect x="1424.5" y="275.8" width="1.3" height="1.8" fill="#808080"/><rect x="1415.4" y="278.4" width="2.6" height="1.8" fill="#808080"/><rect x="1418.0" y="278.4" width="5.2" height="1.8" fill="#569cd6"/><rect x="1423.2" y="278.4" width="1.3" height="1.8" fill="#808080"/><rect x="1424.5" y="278.4" width="1.3" height="1.8" fill="#d4d4d4"/><rect x="1410.2" y="281.1" width="2.6" height="1.8" fill="#808080"/><rect x="1412.8" y="281.1" width="1.3" height="1.8" fill="#569cd6"/><rect x="1414.1" y="281.1" width="1.3" height="1.8" fill="#808080"/><rect x="1405.0" y="283.7" width="2.6" height="1.8" fill="#808080"/><rect x="1407.6" y="283.7" width="3.9" height="1.8" fill="#569cd6"/><rect x="1411.5" y="283.7" width="1.3" height="1.8" fill="#808080"/><rect x="1399.8" y="286.4" width="2.6" height="1.8" fill="#d4d4d4"/><rect x="1394.6" y="289.0" width="2.6" height="1.8" fill="#d4d4d4"/><rect x="1394.6" y="294.3" width="3.9" height="1.8" fill="#6a9955"/><rect x="1395.9" y="296.9" width="1.3" height="1.8" fill="#6a9955"/><rect x="1398.5" y="296.9" width="3.9" height="1.8" fill="#6a9955"/><rect x="1403.7" y="296.9" width="5.2" height="1.8" fill="#6a9955"/><rect x="1410.2" y="296.9" width="10.4" height="1.8" fill="#6a9955"/><rect x="1421.9" y="296.9" width="9.1" height="1.8" fill="#6a9955"/><rect x="1432.3" y="296.9" width="3.9" height="1.8" fill="#6a9955"/><rect x="1437.5" y="296.9" width="3.9" height="1.8" fill="#6a9955"/><rect x="1442.7" y="296.9" width="2.6" height="1.8" fill="#6a9955"/><rect x="1446.6" y="296.9" width="6.5" height="1.8" fill="#6a9955"/><rect x="1454.4" y="296.9" width="3.9" height="1.8" fill="#6a9955"/><rect x="1459.6" y="296.9" width="11.7" height="1.8" fill="#6a9955"/><rect x="1472.6" y="296.9" width="13.0" height="1.8" fill="#6a9955"/><rect x="1486.9" y="296.9" width="7.8" height="1.8" fill="#6a9955"/><rect x="1496.0" y="296.9" width="2.6" height="1.8" fill="#6a9955"/><rect x="1499.9" y="296.9" width="10.4" height="1.8" fill="#6a9955"/><rect x="1395.9" y="299.6" width="1.3" height="1.8" fill="#6a9955"/><rect x="1398.5" y="299.6" width="5.2" height="1.8" fill="#6a9955"/><rect x="1405.0" y="299.6" width="3.9" height="1.8" fill="#6a9955"/><rect x="1410.2" y="299.6" width="6.5" height="1.8" fill="#6a9955"/><rect x="1418.0" y="299.6" width="9.1" height="1.8" fill="#6a9955"/><rect x="1428.4" y="299.6" width="6.5" height="1.8" fill="#6a9955"/><rect x="1436.2" y="299.6" width="2.6" height="1.8" fill="#6a9955"/><rect x="1440.1" y="299.6" width="5.2" height="1.8" fill="#6a9955"/><rect x="1446.6" y="299.6" width="13.0" height="1.8" fill="#6a9955"/><rect x="1460.9" y="299.6" width="2.6" height="1.8" fill="#6a9955"/><rect x="1464.8" y="299.6" width="11.7" height="1.8" fill="#6a9955"/><rect x="1477.8" y="299.6" width="5.2" height="1.8" fill="#6a9955"/><rect x="1484.3" y="299.6" width="16.9" height="1.8" fill="#6a9955"/><rect x="1395.9" y="302.2" width="1.3" height="1.8" fill="#6a9955"/><rect x="1395.9" y="304.9" width="1.3" height="1.8" fill="#6a9955"/><rect x="1398.5" y="304.9" width="3.9" height="1.8" fill="#6a9955"/><rect x="1403.7" y="304.9" width="7.8" height="1.8" fill="#6a9955"/><rect x="1412.8" y="304.9" width="10.4" height="1.8" fill="#6a9955"/><rect x="1424.5" y="304.9" width="5.2" height="1.8" fill="#6a9955"/><rect x="1431.0" y="304.9" width="2.6" height="1.8" fill="#6a9955"/><rect x="1434.9" y="304.9" width="11.7" height="1.8" fill="#6a9955"/><rect x="1447.9" y="304.9" width="3.9" height="1.8" fill="#6a9955"/><rect x="1453.1" y="304.9" width="5.2" height="1.8" fill="#6a9955"/><rect x="1459.6" y="304.9" width="2.6" height="1.8" fill="#6a9955"/><rect x="1463.5" y="304.9" width="1.3" height="1.8" fill="#6a9955"/><rect x="1466.1" y="304.9" width="6.5" height="1.8" fill="#6a9955"/><rect x="1473.9" y="304.9" width="11.7" height="1.8" fill="#6a9955"/><rect x="1395.9" y="307.5" width="1.3" height="1.8" fill="#6a9955"/><rect x="1395.9" y="310.2" width="1.3" height="1.8" fill="#6a9955"/><rect x="1398.5" y="310.2" width="6.5" height="1.8" fill="#569cd6"/><rect x="1406.3" y="310.2" width="87.1" height="1.8" fill="#6a9955"/><rect x="1395.9" y="312.8" width="1.3" height="1.8" fill="#6a9955"/><rect x="1395.9" y="315.5" width="1.3" height="1.8" fill="#6a9955"/><rect x="1398.5" y="315.5" width="7.8" height="1.8" fill="#569cd6"/><rect x="1407.6" y="315.5" width="10.4" height="1.8" fill="#4ec9b0"/><rect x="1419.3" y="315.5" width="6.5" height="1.8" fill="#6a9955"/><rect x="1427.1" y="315.5" width="7.8" height="1.8" fill="#6a9955"/><rect x="1395.9" y="318.1" width="1.3" height="1.8" fill="#6a9955"/><rect x="1398.5" y="318.1" width="10.4" height="1.8" fill="#569cd6"/><rect x="1410.2" y="318.1" width="9.1" height="1.8" fill="#4ec9b0"/><rect x="1420.6" y="318.1" width="3.9" height="1.8" fill="#6a9955"/><rect x="1425.8" y="318.1" width="10.4" height="1.8" fill="#6a9955"/><rect x="1437.5" y="318.1" width="6.5" height="1.8" fill="#6a9955"/><rect x="1395.9" y="320.8" width="2.6" height="1.8" fill="#6a9955"/><rect x="1394.6" y="323.4" width="5.2" height="1.8" fill="#9cdcfe"/><rect x="1399.8" y="323.4" width="1.3" height="1.8" fill="#d4d4d4"/><rect x="1402.4" y="323.4" width="1.3" height="1.8" fill="#d4d4d4"/><rect x="1405.0" y="323.4" width="6.5" height="1.8" fill="#9cdcfe"/><rect x="1412.8" y="323.4" width="1.3" height="1.8" fill="#d4d4d4"/><rect x="1415.4" y="323.4" width="1.3" height="1.8" fill="#d4d4d4"/><rect x="1416.7" y="323.4" width="1.3" height="1.8" fill="#808080"/><rect x="1419.3" y="323.4" width="1.3" height="1.8" fill="#d4d4d4"/><rect x="1399.8" y="326.0" width="7.8" height="1.8" fill="#dcdcaa"/><rect x="1408.9" y="326.0" width="1.3" height="1.8" fill="#d4d4d4"/><rect x="1405.0" y="328.7" width="1.3" height="1.8" fill="#808080"/><rect x="1406.3" y="328.7" width="3.9" height="1.8" fill="#569cd6"/><rect x="1411.5" y="328.7" width="11.7" height="1.8" fill="#9cdcfe"/><rect x="1423.2" y="328.7" width="2.6" height="1.8" fill="#d4d4d4"/><rect x="1427.1" y="328.7" width="6.5" height="1.8" fill="#9cdcfe"/><rect x="1433.6" y="328.7" width="1.3" height="1.8" fill="#d4d4d4"/><rect x="1434.9" y="328.7" width="11.7" height="1.8" fill="#9cdcfe"/><rect x="1447.9" y="328.7" width="1.3" height="1.8" fill="#d4d4d4"/><rect x="1449.2" y="328.7" width="1.3" height="1.8" fill="#808080"/><rect x="1410.2" y="331.3" width="1.3" height="1.8" fill="#808080"/><rect x="1411.5" y="331.3" width="1.3" height="1.8" fill="#569cd6"/><rect x="1412.8" y="331.3" width="1.3" height="1.8" fill="#808080"/><rect x="1414.1" y="331.3" width="1.3" height="1.8" fill="#d4d4d4"/><rect x="1416.7" y="331.3" width="6.5" height="1.8" fill="#d4d4d4"/><rect x="1424.5" y="331.3" width="5.2" height="1.8" fill="#d4d4d4"/><rect x="1431.0" y="331.3" width="3.9" height="1.8" fill="#d4d4d4"/><rect x="1436.2" y="331.3" width="11.7" height="1.8" fill="#d4d4d4"/><rect x="1447.9" y="331.3" width="2.6" height="1.8" fill="#808080"/><rect x="1450.5" y="331.3" width="1.3" height="1.8" fill="#569cd6"/><rect x="1451.8" y="331.3" width="1.3" height="1.8" fill="#808080"/><rect x="1410.2" y="334.0" width="1.3" height="1.8" fill="#808080"/><rect x="1411.5" y="334.0" width="1.3" height="1.8" fill="#569cd6"/><rect x="1412.8" y="334.0" width="1.3" height="1.8" fill="#808080"/><rect x="1415.4" y="336.6" width="3.9" height="1.8" fill="#d4d4d4"/><rect x="1420.6" y="336.6" width="7.8" height="1.8" fill="#d4d4d4"/><rect x="1429.7" y="336.6" width="1.3" height="1.8" fill="#808080"/><rect x="1431.0" y="336.6" width="5.2" height="1.8" fill="#569cd6"/><rect x="1436.2" y="336.6" width="1.3" height="1.8" fill="#808080"/><rect x="1437.5" y="336.6" width="18.2" height="1.8" fill="#d4d4d4"/><rect x="1455.7" y="336.6" width="2.6" height="1.8" fill="#808080"/><rect x="1458.3" y="336.6" width="5.2" height="1.8" fill="#569cd6"/><rect x="1463.5" y="336.6" width="1.3" height="1.8" fill="#808080"/><rect x="1466.1" y="336.6" width="2.6" height="1.8" fill="#d4d4d4"/><rect x="1470.0" y="336.6" width="1.3" height="1.8" fill="#d4d4d4"/><rect x="1472.6" y="336.6" width="3.9" height="1.8" fill="#d4d4d4"/><rect x="1477.8" y="336.6" width="11.7" height="1.8" fill="#d4d4d4"/><rect x="1490.8" y="336.6" width="7.8" height="1.8" fill="#d4d4d4"/><rect x="1410.2" y="339.3" width="2.6" height="1.8" fill="#808080"/><rect x="1412.8" y="339.3" width="1.3" height="1.8" fill="#569cd6"/><rect x="1414.1" y="339.3" width="1.3" height="1.8" fill="#808080"/><rect x="1410.2" y="341.9" width="1.3" height="1.8" fill="#808080"/><rect x="1411.5" y="341.9" width="1.3" height="1.8" fill="#569cd6"/><rect x="1412.8" y="341.9" width="1.3" height="1.8" fill="#808080"/><rect x="1415.4" y="344.6" width="2.6" height="1.8" fill="#d4d4d4"/><rect x="1419.3" y="344.6" width="3.9" height="1.8" fill="#d4d4d4"/><rect x="1424.5" y="344.6" width="9.1" height="1.8" fill="#d4d4d4"/><rect x="1434.9" y="344.6" width="5.2" height="1.8" fill="#d4d4d4"/><rect x="1441.4" y="344.6" width="1.3" height="1.8" fill="#ce9178"/><rect x="1444.0" y="344.6" width="1.3" height="1.8" fill="#ce9178"/><rect x="1446.6" y="344.6" width="1.3" height="1.8" fill="#d4d4d4"/><rect x="1415.4" y="347.2" width="1.3" height="1.8" fill="#808080"/><rect x="1416.7" y="347.2" width="5.2" height="1.8" fill="#569cd6"/><rect x="1421.9" y="347.2" width="1.3" height="1.8" fill="#808080"/><rect x="1420.6" y="349.9" width="1.3" height="1.8" fill="#808080"/><rect x="1421.9" y="349.9" width="1.3" height="1.8" fill="#569cd6"/><rect x="1424.5" y="349.9" width="5.2" height="1.8" fill="#9cdcfe"/><rect x="1429.7" y="349.9" width="1.3" height="1.8" fill="#d4d4d4"/><rect x="1431.0" y="349.9" width="65.0" height="1.8" fill="#ce9178"/><rect x="1496.0" y="349.9" width="1.3" height="1.8" fill="#808080"/><rect x="1425.8" y="352.5" width="23.4" height="1.8" fill="#d4d4d4"/><rect x="1420.6" y="355.1" width="2.6" height="1.8" fill="#808080"/><rect x="1423.2" y="355.1" width="1.3" height="1.8" fill="#569cd6"/><rect x="1424.5" y="355.1" width="1.3" height="1.8" fill="#808080"/><rect x="1415.4" y="357.8" width="2.6" height="1.8" fill="#808080"/><rect x="1418.0" y="357.8" width="5.2" height="1.8" fill="#569cd6"/><rect x="1423.2" y="357.8" width="1.3" height="1.8" fill="#808080"/><rect x="1424.5" y="357.8" width="1.3" height="1.8" fill="#d4d4d4"/><rect x="1410.2" y="360.4" width="2.6" height="1.8" fill="#808080"/><rect x="1412.8" y="360.4" width="1.3" height="1.8" fill="#569cd6"/><rect x="1414.1" y="360.4" width="1.3" height="1.8" fill="#808080"/><rect x="1405.0" y="363.1" width="2.6" height="1.8" fill="#808080"/><rect x="1407.6" y="363.1" width="3.9" height="1.8" fill="#569cd6"/><rect x="1411.5" y="363.1" width="1.3" height="1.8" fill="#808080"/><rect x="1399.8" y="365.7" width="2.6" height="1.8" fill="#d4d4d4"/><rect x="1394.6" y="368.4" width="2.6" height="1.8" fill="#d4d4d4"/><rect x="1389.4" y="371.0" width="1.3" height="1.8" fill="#d4d4d4"/><rect x="1392.0" y="371.0" width="2.6" height="1.8" fill="#d4d4d4"/></g><rect x="1517" y="112" width="1" height="519" fill="#333333"/><rect x="1518" y="112" width="17" height="2.5" fill="#c6c6c6"/></svg><svg class="ov" viewBox="0 0 1536 970"><circle cx="19" cy="15" r="8" fill="#fe5f57"/><circle cx="45" cy="15" r="8" fill="#febc2e"/><circle cx="71.3" cy="15" r="8" fill="#28c840"/><rect x="0" y="37" width="3" height="63" fill="#ffffff"/><g fill="none" stroke="#ffffff" stroke-width="2.1" stroke-linejoin="round"><path d="M26.9,61.9 H22 a3,3 0 0 0 -3,3 V79.6 a3,3 0 0 0 3,3 H32.8 a3,3 0 0 0 3,-3 V74.5"/><path d="M38.8,54.2 H29.9 a3,3 0 0 0 -3,3 V71.5 a3,3 0 0 0 3,3 H40.7 a3,3 0 0 0 3,-3 V59 Z"/><path d="M38.8,54.2 V59 H43.7"/></g><g fill="none" stroke="#858585" stroke-width="1.9" stroke-linecap="round"><circle cx="36.2" cy="126.3" r="9.4"/><path d="M29.3,133.6 L19.2,145"/></g><g fill="none" stroke="#858585" stroke-width="1.8"><circle cx="25.1" cy="182.8" r="3.8"/><circle cx="38.8" cy="188.9" r="3.8"/><circle cx="25.1" cy="204.9" r="3.8"/><path d="M25.1,186.6 V201.1"/><path d="M37.5,192.5 C36.5,197 33,197.6 29.5,197.8 C26.5,198 25.3,199.2 25.1,201"/></g><g fill="none" stroke="#858585" stroke-width="1.9" stroke-linejoin="miter"><path d="M27.2,255.5 V242.4 L46.1,254.4 L34.6,262.3"/></g><g fill="none" stroke="#858585" stroke-width="1.7"><ellipse cx="24.1" cy="267" rx="4.4" ry="6"/><path d="M19.8,263.3 H28.4"/><path d="M17,259.5 L20.3,261.8 M31.2,259.5 L27.9,261.8 M16.2,266 H19.7 M28.5,266 H32 M17,272.8 L20.2,270.5 M31.2,272.8 L28,270.5"/></g><g fill="none" stroke="#858585" stroke-width="1.9" stroke-linejoin="round"><path d="M17.5,312.2 a1.5,1.5 0 0 1 1.5,-1.5 H27.2 a1.5,1.5 0 0 1 1.5,1.5 V323.5 H39 a1.5,1.5 0 0 1 1.5,1.5 V332.3 a1.5,1.5 0 0 1 -1.5,1.5 H19 a1.5,1.5 0 0 1 -1.5,-1.5 Z"/><path d="M17.5,323.5 H28.7 V333.8"/><rect x="35" y="305" width="11.8" height="11.5" rx="2"/></g><g fill="none" stroke="#858585" stroke-width="1.9"><path d="M29,389.9 H19 a1,1 0 0 1 -1,-1 V371.3 a1,1 0 0 1 1,-1 H43.7 a1,1 0 0 1 1,1 V380.9"/><path d="M23,394.8 H30.4"/><circle cx="39.7" cy="389.9" r="7"/></g><g fill="none" stroke="#858585" stroke-width="1.3"><path d="M36.2,387.5 L38.6,390 L36.2,392.5 M43.2,387.3 L40.8,389.8 L43.2,392.3"/></g><g fill="#858585"><path d="M16,445 H40.5 C40.8,442 42,440.2 42.2,439.4 C43.5,440.5 44.2,442 44.4,443.4 C45.5,443.2 46.4,443.4 47.2,444.2 C46.3,445.8 45,446.4 43.6,446.6 C41.2,452.5 35.5,456.9 27.5,456.9 C20.5,456.9 16.6,452 16,445 Z"/><rect x="19" y="441.6" width="3.1" height="2.9"/><rect x="22.8" y="441.6" width="3.1" height="2.9"/><rect x="26.6" y="441.6" width="3.1" height="2.9"/><rect x="30.4" y="441.6" width="3.1" height="2.9"/><rect x="34.2" y="441.6" width="3.1" height="2.9"/><rect x="22.8" y="438.1" width="3.1" height="2.9"/><rect x="26.6" y="438.1" width="3.1" height="2.9"/><rect x="30.4" y="438.1" width="3.1" height="2.9"/><rect x="30.4" y="434.6" width="3.1" height="2.9"/></g><g fill="none" stroke="#858585" stroke-width="1.9"><circle cx="32" cy="846.3" r="14.6"/><circle cx="32" cy="843.3" r="6.1"/><path d="M22.3,856.8 C24.5,852.5 28,850.4 32,850.4 C36,850.4 39.5,852.5 41.7,856.8"/></g><g fill="none" stroke="#858585" stroke-width="1.9" stroke-linejoin="round"><path d="M28.17,899.24 L29.01,894.87 L34.59,894.87 L35.43,899.24 L36.28,899.59 L39.96,897.10 L43.90,901.04 L41.41,904.72 L41.76,905.57 L46.13,906.41 L46.13,911.99 L41.76,912.83 L41.41,913.68 L43.90,917.36 L39.96,921.30 L36.28,918.81 L35.43,919.16 L34.59,923.53 L29.01,923.53 L28.17,919.16 L27.32,918.81 L23.64,921.30 L19.70,917.36 L22.19,913.68 L21.84,912.83 L17.47,911.99 L17.47,906.41 L21.84,905.57 L22.19,904.72 L19.70,901.04 L23.64,897.10 L27.32,899.59 Z"/><circle cx="31.8" cy="909.2" r="3.4"/></g><circle cx="42.5" cy="919.4" r="10.2" fill="#0a7fd6"/><path d="M40.2,916.6 L43.4,914.2 V925" fill="none" stroke="#ffffff" stroke-width="2.2" stroke-linejoin="round"/><path d="M70,94.675 L76.25,100.925 L82.5,94.675" fill="none" stroke="#c5c5c5" stroke-width="1.3"/><path d="M86,123.475 L92.25,129.725 L98.5,123.475" fill="none" stroke="#c5c5c5" stroke-width="1.3"/><path d="M89.125,235.55 L95.375,241.8 L89.125,248.05" fill="none" stroke="#c5c5c5" stroke-width="1.3"/><path d="M86,267.475 L92.25,273.725 L98.5,267.475" fill="none" stroke="#c5c5c5" stroke-width="1.3"/><path d="M97,296.275 L103.25,302.525 L109.5,296.275" fill="none" stroke="#c5c5c5" stroke-width="1.3"/><path d="M72.125,920.75 L78.375,927 L72.125,933.25" fill="none" stroke="#c5c5c5" stroke-width="1.3"/><text x="96" y="160.70000000000002" fill="#cbcb41" font-family="Liberation Sans" font-weight="700" font-size="14.4" textLength="13.8" lengthAdjust="spacingAndGlyphs">JS</text><text x="96" y="190.2" fill="#519aba" font-family="Liberation Sans" font-weight="700" font-size="17" textLength="13" lengthAdjust="spacingAndGlyphs">#</text><text x="96" y="219.0" fill="#519aba" font-family="Liberation Sans" font-weight="700" font-size="17" textLength="13" lengthAdjust="spacingAndGlyphs">#</text><text x="106" y="333.5" fill="#cbcb41" font-family="Liberation Sans" font-weight="700" font-size="14.4" textLength="13.8" lengthAdjust="spacingAndGlyphs">JS</text><g transform="translate(102,345.0)" fill="none" stroke="#f55385" stroke-width="1.6" stroke-linecap="round" stroke-linejoin="round"><path d="M10.4,9.6 C12.5,9.8 15.5,9 16.4,7.2 C17.2,5.5 15.8,4.2 13.5,4.2 C10.5,4.2 7,6 5.6,8.6 C4.6,10.5 6,12 7.5,13 C9.3,14.3 9.8,16 8.8,17.3 C7.8,18.5 6,18.3 6,16.8 C6,15.3 7.5,14 9.5,13.2"/></g><g transform="translate(102,373.8)" fill="none" stroke="#f55385" stroke-width="1.6" stroke-linecap="round" stroke-linejoin="round"><path d="M10.4,9.6 C12.5,9.8 15.5,9 16.4,7.2 C17.2,5.5 15.8,4.2 13.5,4.2 C10.5,4.2 7,6 5.6,8.6 C4.6,10.5 6,12 7.5,13 C9.3,14.3 9.8,16 8.8,17.3 C7.8,18.5 6,18.3 6,16.8 C6,15.3 7.5,14 9.5,13.2"/></g><text x="96" y="419.90000000000003" fill="#cbcb41" font-family="Liberation Sans" font-weight="700" font-size="14.4" textLength="13.8" lengthAdjust="spacingAndGlyphs">JS</text><g transform="translate(92,431.40000000000003)" fill="none" stroke="#f55385" stroke-width="1.6" stroke-linecap="round" stroke-linejoin="round"><path d="M10.4,9.6 C12.5,9.8 15.5,9 16.4,7.2 C17.2,5.5 15.8,4.2 13.5,4.2 C10.5,4.2 7,6 5.6,8.6 C4.6,10.5 6,12 7.5,13 C9.3,14.3 9.8,16 8.8,17.3 C7.8,18.5 6,18.3 6,16.8 C6,15.3 7.5,14 9.5,13.2"/></g><g transform="translate(94,466.00000000000006)" fill="#a074c4"><ellipse cx="4.6" cy="4.6" rx="4.4" ry="4.6"/><ellipse cx="11.6" cy="5.2" rx="4.2" ry="4.6"/><rect x="6" y="5" width="3" height="7" rx="1.2"/><rect x="11.3" y="5" width="3" height="6.8" rx="1.2"/><rect x="7" y="5" width="6" height="4"/><path d="M2.5,7.5 L4.6,8 L4.3,11 L3,11 Z" fill="#c9b3dc"/></g><g fill="#6d8086" stroke="#6d8086" stroke-width="1" stroke-linejoin="round"><path d="M90.05,495.93 L90.51,493.83 L93.29,493.83 L93.75,495.93 L94.18,496.11 L95.98,494.95 L97.95,496.92 L96.79,498.72 L96.97,499.15 L99.07,499.61 L99.07,502.39 L96.97,502.85 L96.79,503.28 L97.95,505.08 L95.98,507.05 L94.18,505.89 L93.75,506.07 L93.29,508.17 L90.51,508.17 L90.05,506.07 L89.62,505.89 L87.82,507.05 L85.85,505.08 L87.01,503.28 L86.83,502.85 L84.73,502.39 L84.73,499.61 L86.83,499.15 L87.01,498.72 L85.85,496.92 L87.82,494.95 L89.62,496.11 Z"/></g><circle cx="91.9" cy="501.0" r="2.3" fill="#252526"/><path d="M99.90,529.80 L95.90,536.73 L87.90,536.73 L83.90,529.80 L87.90,522.87 L95.90,522.87 Z" fill="#4b5559"/><path d="M97.40,529.80 L94.65,534.56 L89.15,534.56 L86.40,529.80 L89.15,525.04 L94.65,525.04 Z" fill="#252526"/><path d="M95.90,529.80 L93.90,533.26 L89.90,533.26 L87.90,529.80 L89.90,526.34 L93.90,526.34 Z" fill="#4b5559"/><path d="M99.90,558.60 L95.90,565.53 L87.90,565.53 L83.90,558.60 L87.90,551.67 L95.90,551.67 Z" fill="#a074c4"/><path d="M97.40,558.60 L94.65,563.36 L89.15,563.36 L86.40,558.60 L89.15,553.84 L94.65,553.84 Z" fill="#252526"/><path d="M95.90,558.60 L93.90,562.06 L89.90,562.06 L87.90,558.60 L89.90,555.14 L93.90,555.14 Z" fill="#a074c4"/><path d="M91.9,580.1 L99.2,587.4 L91.9,594.6999999999999 L84.6,587.4 Z" fill="#41535b"/><path d="M91.3,584.4 V590.9" stroke="#252526" stroke-width="1.3"/><circle cx="91.3" cy="590.9" r="1.2" fill="#252526"/><circle cx="93.8" cy="586.4" r="1.1" fill="#252526"/><text x="84.7" y="621.8" fill="#cbcb41" font-family="Liberation Sans" font-weight="400" font-size="16" textLength="14.6" lengthAdjust="spacing" xml:space="preserve">{ }</text><text x="84.7" y="650.6" fill="#cbcb41" font-family="Liberation Sans" font-weight="400" font-size="16" textLength="14.6" lengthAdjust="spacing" xml:space="preserve">{ }</text><g transform="translate(83,667.5999999999999)" fill="#a074c4"><ellipse cx="4.6" cy="4.6" rx="4.4" ry="4.6"/><ellipse cx="11.6" cy="5.2" rx="4.2" ry="4.6"/><rect x="6" y="5" width="3" height="7" rx="1.2"/><rect x="11.3" y="5" width="3" height="6.8" rx="1.2"/><rect x="7" y="5" width="6" height="4"/><path d="M2.5,7.5 L4.6,8 L4.3,11 L3,11 Z" fill="#c9b3dc"/></g><circle cx="92.5" cy="702.6" r="7" fill="none" stroke="#519aba" stroke-width="1.8"/><rect x="91.3" y="701.0" width="2.5" height="6.2" fill="#519aba"/><circle cx="92.5" cy="698.5" r="1.35" fill="#519aba"/><text x="434" y="65.3" fill="#cbcb41" font-family="Liberation Sans" font-weight="700" font-size="14.4" textLength="13.8" lengthAdjust="spacingAndGlyphs">JS</text><path d="M547,55 L558,66 M558,55 L547,66" stroke="#ffffff" stroke-width="1.4"/><path d="M468.125,91.05 L474.375,97.3 L468.125,103.55" fill="none" stroke="#a9a9a9" stroke-width="1.3"/><path d="M531.625,91.05 L537.875,97.3 L531.625,103.55" fill="none" stroke="#a9a9a9" stroke-width="1.3"/><path d="M642.625,91.05 L648.875,97.3 L642.625,103.55" fill="none" stroke="#a9a9a9" stroke-width="1.3"/><text x="551" y="103.3" fill="#cbcb41" font-family="Liberation Sans" font-weight="700" font-size="14.4" textLength="13.8" lengthAdjust="spacingAndGlyphs">JS</text><g fill="none" stroke="#c5c5c5" stroke-width="1.6"><rect x="1464" y="52" width="16" height="16" rx="1.5"/><path d="M1472,52 V68"/></g><circle cx="1499" cy="60.5" r="1.3" fill="#c5c5c5"/><circle cx="1505.5" cy="60.5" r="1.3" fill="#c5c5c5"/><circle cx="1512" cy="60.5" r="1.3" fill="#c5c5c5"/><g fill="none" stroke="#c5c5c5" stroke-width="1.5"><path d="M1419,647 V664 M1410.5,655.5 H1427.5"/><path d="M1436,654 L1441,659 L1446,654"/><path d="M1464,659.5 L1471,652.5 L1478,659.5"/><path d="M1499,649 L1511,661 M1511,649 L1499,661"/></g><g fill="none" stroke="#c5c5c5" stroke-width="1.6"><path d="M1401.2,702 V691.2 H1410.4"/><path d="M1401.2,709.7 V720 H1410.4"/></g><g fill="none" stroke="#a0a0a0" stroke-width="1.1"><path d="M1424.80,682.10 L1432.77,686.70 L1432.77,695.90 L1424.80,700.50 L1416.83,695.90 L1416.83,686.70 Z"/></g><path d="M1424.8,691.3 L1432.77,686.6999999999999 V695.9 L1424.8,700.5 Z" fill="#d0d0d0"/><text x="1426.3" y="697.8" font-family="Liberation Sans" font-size="7" font-weight="700" fill="#333">$_</text><g fill="none" stroke="#a0a0a0" stroke-width="1.1"><path d="M1424.80,710.90 L1432.77,715.50 L1432.77,724.70 L1424.80,729.30 L1416.83,724.70 L1416.83,715.50 Z"/></g><path d="M1424.8,720.0999999999999 L1432.77,715.4999999999999 V724.6999999999999 L1424.8,729.3 Z" fill="#d0d0d0"/><text x="1426.3" y="726.5999999999999" font-family="Liberation Sans" font-size="7" font-weight="700" fill="#333">$_</text><g fill="none" stroke="#a0a0a0" stroke-width="1.1"><path d="M1402.80,739.70 L1410.77,744.30 L1410.77,753.50 L1402.80,758.10 L1394.83,753.50 L1394.83,744.30 Z"/></g><path d="M1402.8,748.9 L1410.77,744.3 V753.5 L1402.8,758.1 Z" fill="#d0d0d0"/><text x="1404.3" y="755.4" font-family="Liberation Sans" font-size="7" font-weight="700" fill="#333">$_</text><g fill="none" stroke="#a0a0a0" stroke-width="1.1"><path d="M1402.80,768.50 L1410.77,773.10 L1410.77,782.30 L1402.80,786.90 L1394.83,782.30 L1394.83,773.10 Z"/></g><path d="M1402.8,777.6999999999999 L1410.77,773.0999999999999 V782.3 L1402.8,786.9 Z" fill="#d0d0d0"/><text x="1404.3" y="784.1999999999999" font-family="Liberation Sans" font-size="7" font-weight="700" fill="#333">$_</text><g fill="none" stroke="#ffffff" stroke-width="1.4"><circle cx="64.4" cy="955" r="7"/><path d="M61,951.6 L67.8,958.4 M67.8,951.6 L61,958.4"/><path d="M101.8,947.8 L109.2,961.3 H94.4 Z"/><path d="M101.8,952.5 V957"/></g><circle cx="101.8" cy="959" r="0.8" fill="#fff"/><g fill="none" stroke="#e8f5ee" stroke-width="1.4"><path d="M17.5,951 L22,955.8 L17.5,960.5"/><path d="M28,947 L23.5,951.6 L28,956.3"/></g><g fill="none" stroke="#ffffff" stroke-width="1.3"><circle cx="1464.6" cy="954.4" r="2.9"/><path d="M1459.8,963 C1460.3,959.5 1462.3,957.6 1464.6,957.6 C1466.9,957.6 1468.9,959.5 1469.6,963"/><path d="M1463.6,949.6 V947.6 H1474.8 V954 H1472.4 L1470.8,956.4"/></g><g fill="none" stroke="#ffffff" stroke-width="1.3"><path d="M1500,960.5 H1514 L1512.5,958 V953 C1512.5,949.5 1510,947 1507,947 C1504,947 1501.5,949.5 1501.5,953 V958 Z"/><path d="M1505,962.5 C1505.5,963.8 1508.5,963.8 1509,962.5"/></g></svg><div style="position:absolute;left:0;top:0;width:1536px;height:970px;border-radius:12px;border:2px solid #4e4e4e;border-top-color:#5e5e5e;border-bottom-color:#3a3a3a;pointer-events:none"></div></div></body></html>
